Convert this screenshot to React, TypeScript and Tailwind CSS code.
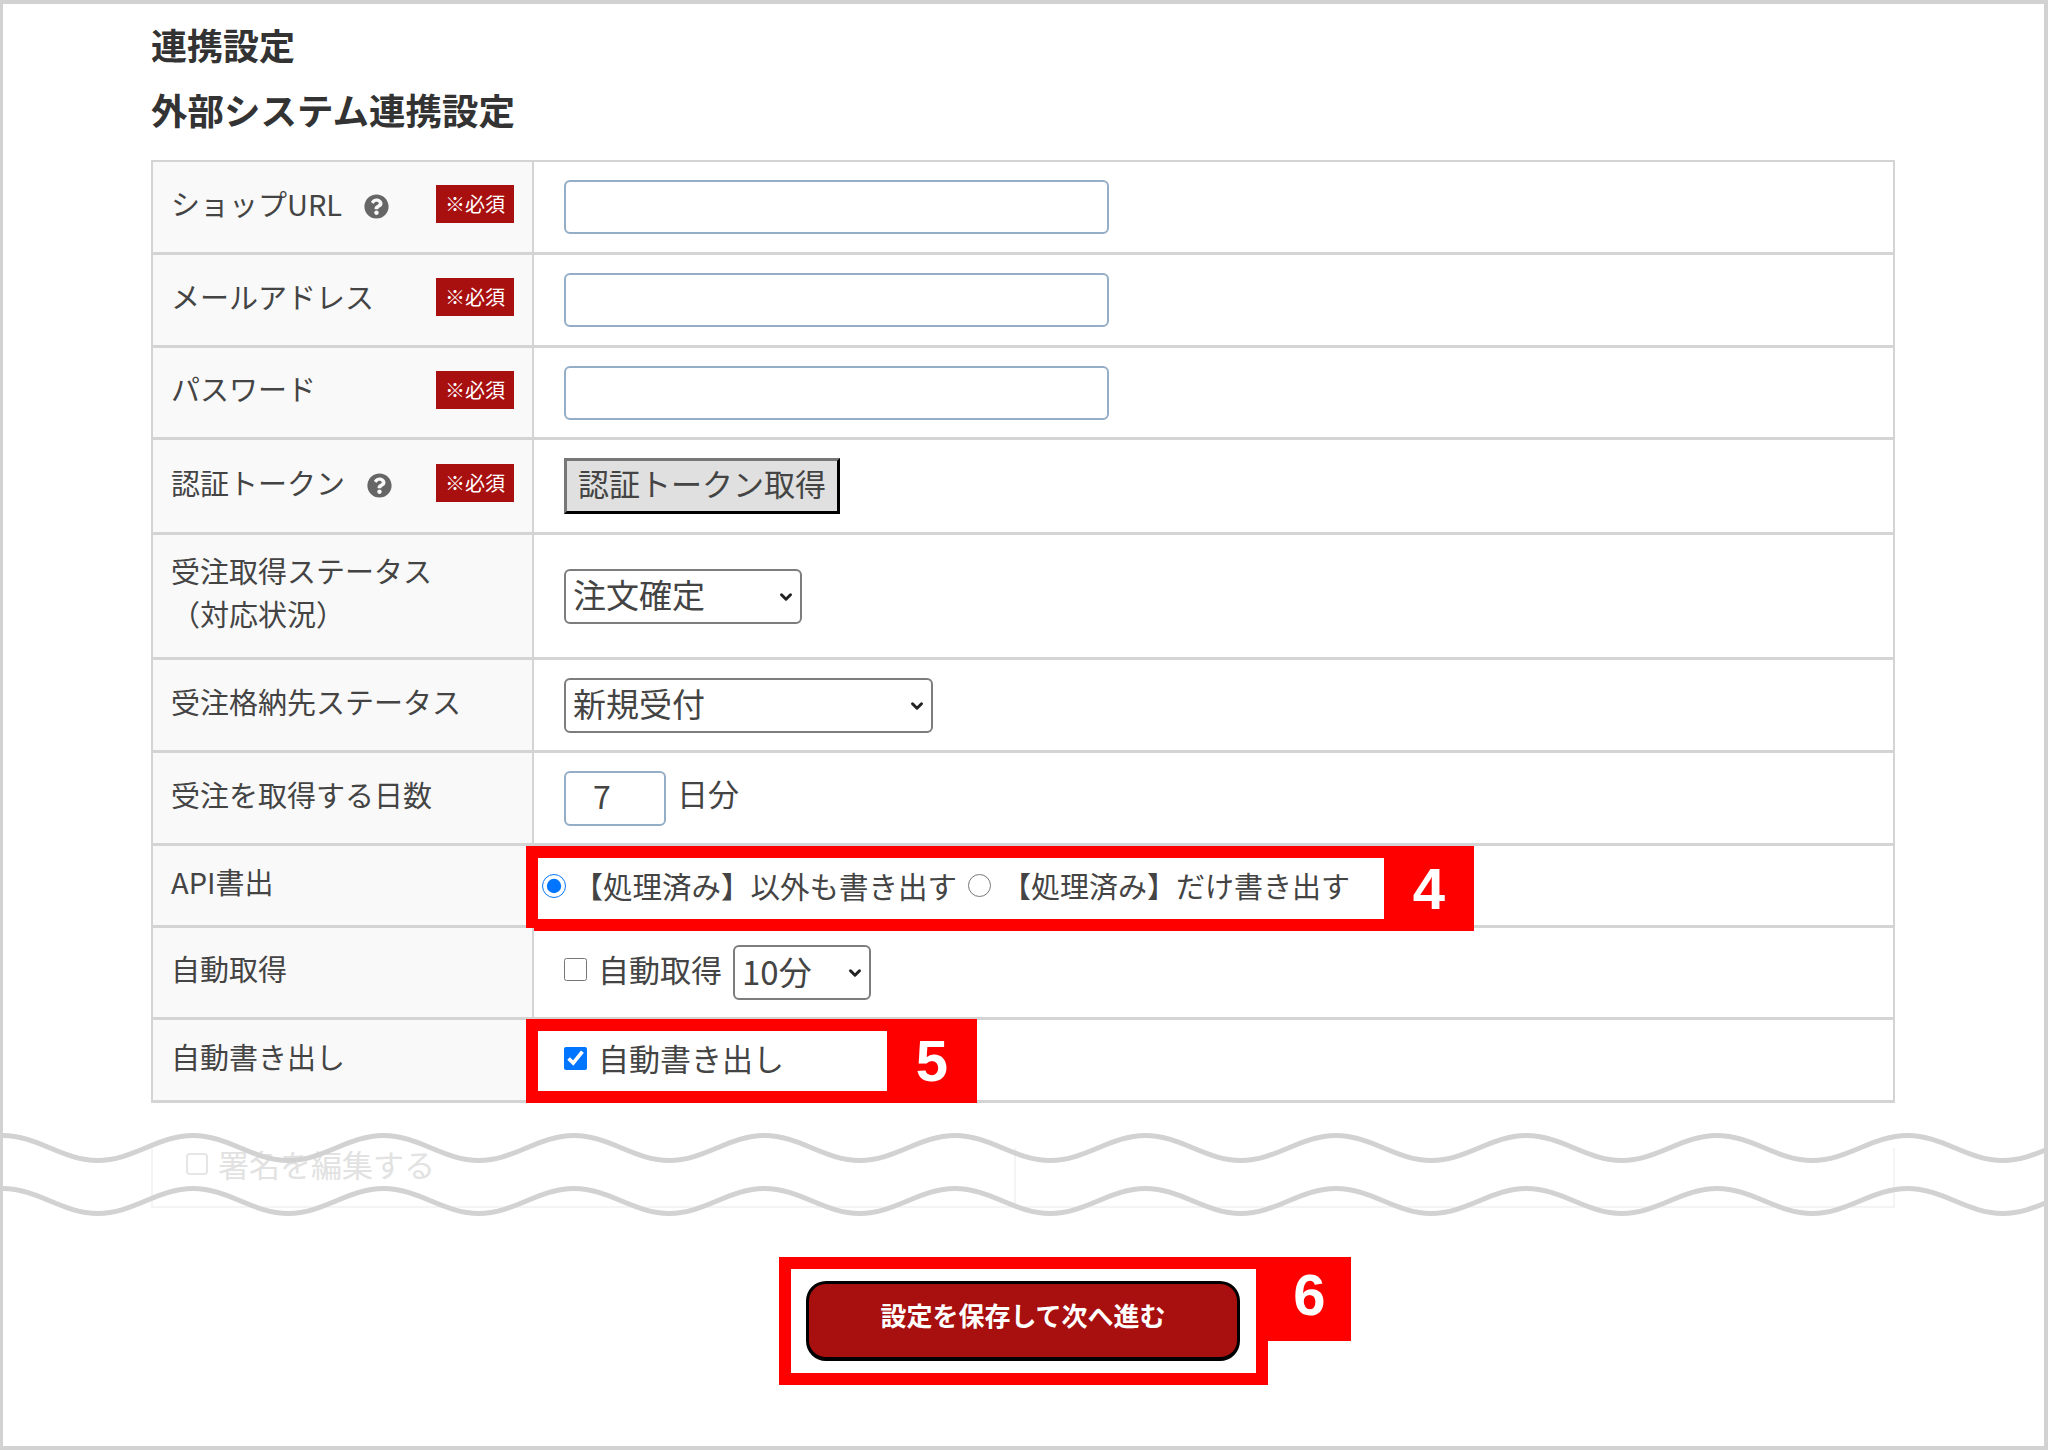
import React from 'react';
import { FaQuestionCircle } from 'react-icons/fa';
import { ChevronDown } from 'lucide-react';

const FONT = 'font-["Noto_Sans_CJK_JP","Noto_Sans_CJK_SC",sans-serif]';

function RequiredBadge() {
  return (
    <span className="ml-auto flex h-[38px] w-[78px] shrink-0 -translate-y-[3px] items-center justify-center bg-[#a80f0f] text-[20px] leading-none text-white">
      ※必須
    </span>
  );
}

function HelpIcon() {
  return <FaQuestionCircle className="ml-[22px] h-[25px] w-[25px] shrink-0 -translate-y-[1px] text-[#666666]" />;
}

function Row({
  height,
  label,
  help,
  required,
  children,
}: {
  height: string;
  label: React.ReactNode;
  help?: boolean;
  required?: boolean;
  children: React.ReactNode;
}) {
  return (
    <div className={`relative flex border-b-[3px] border-[#d4d4d4] ${height}`}>
      <div className="flex w-[381px] shrink-0 items-center border-r-2 border-[#d4d4d4] bg-[#f9f9f9] pl-[18px] pr-[18px] text-[29px] leading-[43px] text-[#444444]">
        <div className="pb-[8px]">{label}</div>
        {help && <HelpIcon />}
        {required && <RequiredBadge />}
      </div>
      <div className="flex flex-1 items-center pl-[30px] text-[30px] text-[#444444]">{children}</div>
    </div>
  );
}

function TextInput() {
  return <input type="text" className="h-[54px] w-[545px] rounded-md border-2 border-[#94aec8] bg-white" />;
}

function Select({ width, value }: { width: string; value: string }) {
  return (
    <div className={`relative h-[55px] ${width}`}>
      <select
        defaultValue={value}
        className="h-full w-full appearance-none rounded-md border-2 border-[#7d7d7d] bg-white pb-[3px] pl-[7px] text-[33px] leading-none text-[#444444]"
      >
        <option>{value}</option>
      </select>
      <ChevronDown strokeWidth={4} className="pointer-events-none absolute right-[7px] top-[19px] h-[18px] w-[18px] text-[#222222]" />
    </div>
  );
}

// red frame with the number block on its right, drawn over the row
function Callout({ className, frame, number }: { className: string; frame: string; number: string }) {
  return (
    <div className={`pointer-events-none absolute flex ${className}`}>
      <div className={`border-[12px] border-r-0 border-[#ff0000] ${frame}`} />
      <div className="flex flex-1 items-center justify-center bg-[#ff0000] font-['Liberation_Sans',sans-serif] text-[58px] font-bold leading-none text-white">
        {number}
      </div>
    </div>
  );
}

function Wave({ top }: { top: string }) {
  const half = 190.5 / 2;
  let d = 'M -191 2.5';
  for (let i = 0; i < 24; i++) {
    const x = -191 + i * half;
    const from = i % 2 === 0 ? 2.5 : 27.5;
    const to = i % 2 === 0 ? 27.5 : 2.5;
    d += ` C ${x + half * 0.37} ${from}, ${x + half * 0.63} ${to}, ${x + half} ${to}`;
  }
  return (
    <svg className={`pointer-events-none absolute left-0 h-[30px] w-[2041px] ${top}`} viewBox="0 0 2041 30" fill="none">
      <path d={d} stroke="#d2d2d2" strokeWidth="5" />
    </svg>
  );
}

export default function App() {
  return (
    <div className={`${FONT} relative h-[1450px] w-[2048px] overflow-hidden border-4 border-l-[3px] border-[#d2d2d2] bg-white`}>
      <div className="ml-[148px] w-[1744px]">
        <h1 className="pt-[22px] text-[36px] font-bold leading-[36px] text-[#333333]">連携設定</h1>
        <h2 className="mt-[30px] text-[36.5px] font-bold leading-[36px] text-[#333333]">外部システム連携設定</h2>

        <div className="mt-[32px] border-x-2 border-t-2 border-[#d4d4d4]">
          <Row height="h-[93px]" label="ショップURL" help required>
            <TextInput />
          </Row>
          <Row height="h-[93px]" label="メールアドレス" required>
            <TextInput />
          </Row>
          <Row height="h-[92px]" label="パスワード" required>
            <TextInput />
          </Row>
          <Row height="h-[95px]" label="認証トークン" help required>
            <button className="h-[56px] w-[276px] border-[3px] border-t-[#777777] border-r-black border-b-black border-l-[#777777] bg-[#e0e0e0] pb-[8px] text-[31px] leading-none text-[#444444]">
              認証トークン取得
            </button>
          </Row>
          <Row
            height="h-[125px]"
            label={
              <>
                受注取得ステータス
                <br />
                （対応状況）
              </>
            }
          >
            <Select width="w-[238px]" value="注文確定" />
          </Row>
          <Row height="h-[93px]" label="受注格納先ステータス">
            <Select width="w-[369px]" value="新規受付" />
          </Row>
          <Row height="h-[93px]" label="受注を取得する日数">
            <input
              type="text"
              defaultValue="7"
              className="h-[55px] w-[102px] rounded-md border-2 border-[#94aec8] bg-white pb-[6px] pl-[27px] text-[32px] text-[#444444]"
            />
            <span className="ml-[11px] pb-[10px] text-[31px]">日分</span>
          </Row>
          <Row height="h-[82px]" label="API書出">
            <label className="-ml-[22px] flex items-center text-[29.5px]">
              <input type="radio" name="api" defaultChecked className="h-[24px] w-[24px]" />
              <span className="ml-[1px] mr-[11px]">&nbsp;【処理済み】以外も書き出す</span>
            </label>
            <label className="flex items-center text-[29px]">
              <input type="radio" name="api" className="h-[23px] w-[23px]" />
              <span className="ml-[11px]">【処理済み】だけ書き出す</span>
            </label>
            <Callout className="left-[373px] top-0 h-[85px] w-[948px]" frame="w-[858px]" number="4" />
          </Row>
          <Row height="h-[92px]" label="自動取得">
            <label className="flex items-center pb-[7px] text-[31px]">
              <input type="checkbox" className="h-[23px] w-[23px]" />
              <span className="ml-[11px]">自動取得</span>
            </label>
            <div className="ml-[11px]">
              <Select width="w-[138px]" value="10分" />
            </div>
          </Row>
          <Row height="h-[83px]" label="自動書き出し">
            <label className="flex items-center pb-[4px] text-[31px]">
              <input type="checkbox" defaultChecked className="h-[23px] w-[23px]" />
              <span className="ml-[11px]">自動書き出し</span>
            </label>
            <Callout className="left-[373px] -top-[1px] h-[84px] w-[451px]" frame="w-[361px]" number="5" />
          </Row>
        </div>

        {/* faded part of the next table, cut off by the waves */}
        <div className="mt-[45px] flex h-[60px] border-x-2 border-b-2 border-[#f4f4f4] text-[31px] text-[#e2e2e2]">
          <div className="flex w-[863px] items-center border-r-2 border-[#f4f4f4] pb-[26px] pl-[33px]">
            <span className="mr-[10px] h-[22px] w-[22px] rounded-[4px] border-2 border-[#e6e6e6]" />
            署名を編集する
          </div>
        </div>

        <div className="relative mx-auto mt-[73px] h-[80px] w-[434px]">
          <button className="h-full w-full rounded-[20px] border-[3px] border-b-4 border-black bg-[#a80f0f] pb-[12px] text-[26px] font-bold leading-none text-white">
            設定を保存して次へ進む
          </button>
          <div className="pointer-events-none absolute -left-[27px] -top-[24px] h-[128px] w-[489px] border-[12px] border-[#ff0000]" />
          <div className="absolute -top-[24px] left-[462px] flex h-[84px] w-[83px] items-center justify-center bg-[#ff0000] pb-[8px] font-['Liberation_Sans',sans-serif] text-[58px] font-bold leading-none text-white">
            6
          </div>
        </div>
      </div>

      <Wave top="top-[1129px]" />
      <Wave top="top-[1182px]" />
    </div>
  );
}
